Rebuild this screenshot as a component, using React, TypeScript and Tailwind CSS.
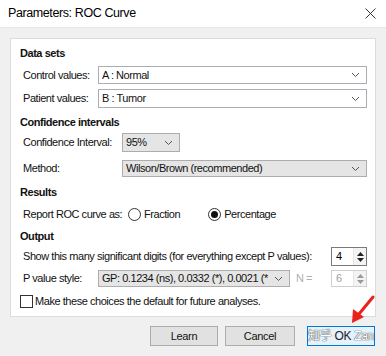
import React from "react";

const Chevron = ({ color = "#555" }: { color?: string }) => (
  <svg width="9" height="6" viewBox="0 0 9 6" className="shrink-0">
    <path d="M1 1 L4.5 4.5 L8 1" fill="none" stroke={color} strokeWidth="1" />
  </svg>
);

const Spinner = ({ value, disabled }: { value: string; disabled?: boolean }) => (
  <div
    className={`flex h-full w-[36px] items-stretch border bg-white ${
      disabled ? "border-[#cfcfcf]" : "border-[#7a7a7a]"
    }`}
  >
    <div className={`flex flex-1 items-center pl-[4px] ${disabled ? "text-[#a0a0a0]" : "text-black"}`}>{value}</div>
    <div className="flex w-[13px] flex-col items-center justify-center gap-[2px] border-l border-[#e6e6e6] bg-[#f3f3f3]">
      <svg width="7" height="4" viewBox="0 0 7 4">
        <path d="M0 4 L3.5 0 L7 4 Z" fill={disabled ? "#9a9a9a" : "#222"} />
      </svg>
      <svg width="7" height="4" viewBox="0 0 7 4">
        <path d="M0 0 L3.5 4 L7 0 Z" fill={disabled ? "#9a9a9a" : "#222"} />
      </svg>
    </div>
  </div>
);

const Radio = ({ checked }: { checked?: boolean }) => (
  <div className="flex h-[13px] w-[13px] shrink-0 items-center justify-center rounded-full border border-[#333]">
    {checked && <div className="h-[7px] w-[7px] rounded-full bg-[#111]" />}
  </div>
);

export default function App() {
  return (
    <div
      className="relative h-[356px] w-[386px] overflow-hidden whitespace-nowrap bg-[#f0f0f0] text-[11px] text-[#111]"
      style={{ fontFamily: '"Liberation Sans", "Noto Sans CJK SC", sans-serif' }}
    >
      {/* Title bar */}
      <div className="flex h-[27px] items-center justify-between bg-white pl-[8px] pr-[10px]">
        <span className="text-[12.5px] tracking-[-0.4px] text-black">Parameters: ROC Curve</span>
        <svg width="11" height="11" viewBox="0 0 11 11">
          <path d="M0.5 0.5 L10.5 10.5 M10.5 0.5 L0.5 10.5" stroke="#333" strokeWidth="1" />
        </svg>
      </div>
      <div className="h-[1px] bg-[#e8e8e8]" />

      {/* Panel */}
      <div className="mx-[10px] mt-[10px] flex h-[279px] flex-col border border-[#dcdcdc] bg-white pl-[9px] pr-[8px] pt-[6px] tracking-[-0.45px]">
        <div className="flex h-[16px] items-center font-bold">Data sets</div>

        <div className="mt-[5px] flex h-[18px] items-center">
          <div className="w-[78px] pl-[3px]">Control values:</div>
          <div className="flex h-full flex-1 items-center justify-between border border-[#abadb3] bg-white pl-[3px] pr-[6px]">
            <span>A : Normal</span>
            <Chevron />
          </div>
        </div>
        <div className="mt-[5px] flex h-[19px] items-center">
          <div className="w-[78px] pl-[3px]">Patient values:</div>
          <div className="flex h-full flex-1 items-center justify-between border border-[#abadb3] bg-white pl-[3px] pr-[6px]">
            <span>B : Tumor</span>
            <Chevron />
          </div>
        </div>

        <div className="mt-[6px] flex h-[16px] items-center font-bold">Confidence intervals</div>
        <div className="mt-[3px] flex h-[19px] items-center">
          <div className="w-[102px] pl-[3px]">Confidence Interval:</div>
          <div className="flex h-full w-[58px] items-center justify-between border border-[#adadad] bg-[#e5e5e5] pl-[3px] pr-[6px]">
            <span>95%</span>
            <Chevron />
          </div>
        </div>
        <div className="mt-[8px] flex h-[17px] items-center">
          <div className="w-[102px] pl-[3px]">Method:</div>
          <div className="flex h-full flex-1 items-center justify-between border border-[#adadad] bg-[#e5e5e5] pl-[3px] pr-[6px]">
            <span>Wilson/Brown (recommended)</span>
            <Chevron />
          </div>
        </div>

        <div className="mt-[7px] flex h-[16px] items-center font-bold">Results</div>
        <div className="mt-[6px] flex h-[16px] items-center">
          <div className="w-[108px] pl-[3px]">Report ROC curve as:</div>
          <Radio />
          <span className="ml-[3px]">Fraction</span>
          <div className="ml-[28px]">
            <Radio checked />
          </div>
          <span className="ml-[3px]">Percentage</span>
        </div>

        <div className="mt-[6px] flex h-[16px] items-center font-bold">Output</div>
        <div className="mt-[3px] flex h-[19px] items-center justify-between">
          <div className="pl-[3px]">Show this many significant digits (for everything except P values):</div>
          <Spinner value="4" />
        </div>
        <div className="mt-[4px] flex h-[17px] items-center">
          <div className="w-[78px] pl-[3px]">P value style:</div>
          <div className="flex h-full w-[192px] items-center justify-between overflow-hidden border border-[#adadad] bg-[#e5e5e5] pl-[3px] pr-[6px]">
            <span className="overflow-hidden whitespace-nowrap">GP: 0.1234 (ns), 0.0332 (*), 0.0021 (*</span>
            <Chevron />
          </div>
          <span className="ml-[6px] text-[#b0b0b0]">N =</span>
          <div className="ml-auto h-full">
            <Spinner value="6" disabled />
          </div>
        </div>

        <div className="mt-[7px] flex h-[14px] items-center">
          <div className="h-[13px] w-[13px] shrink-0 border border-[#333] bg-white" />
          <span className="ml-[2px]">Make these choices the default for future analyses.</span>
        </div>
      </div>

      {/* Buttons */}
      <div className="mt-[9px] flex h-[20px] tracking-[-0.3px]">
        <button className="ml-[150px] h-full w-[68px] border border-[#adadad] bg-[#e1e1e1]">Learn</button>
        <button className="ml-[7px] h-full w-[70px] border border-[#adadad] bg-[#e1e1e1]">Cancel</button>
        <button className="ml-[12px] flex h-full w-[68px] items-center justify-center gap-[3px] border border-[#0078d7] bg-[#e5f1fb] text-[12px]">
          <span className="text-white [text-shadow:0_0_1px_#333,0_0_1px_#333]">知乎</span>
          <span className="text-[#222]">OK</span>
          <span className="text-white [text-shadow:0_0_1px_#333,0_0_1px_#333]">Zan</span>
        </button>
      </div>

      {/* Red arrow annotation */}
      <svg className="absolute left-[340px] top-[290px]" width="40" height="40" viewBox="0 0 40 40">
        <path d="M33 7 L19 24" stroke="#e8231b" strokeWidth="3" strokeLinecap="round" />
        <path d="M12 33 L13 19 L24 27 Z" fill="#e8231b" />
      </svg>
    </div>
  );
}
